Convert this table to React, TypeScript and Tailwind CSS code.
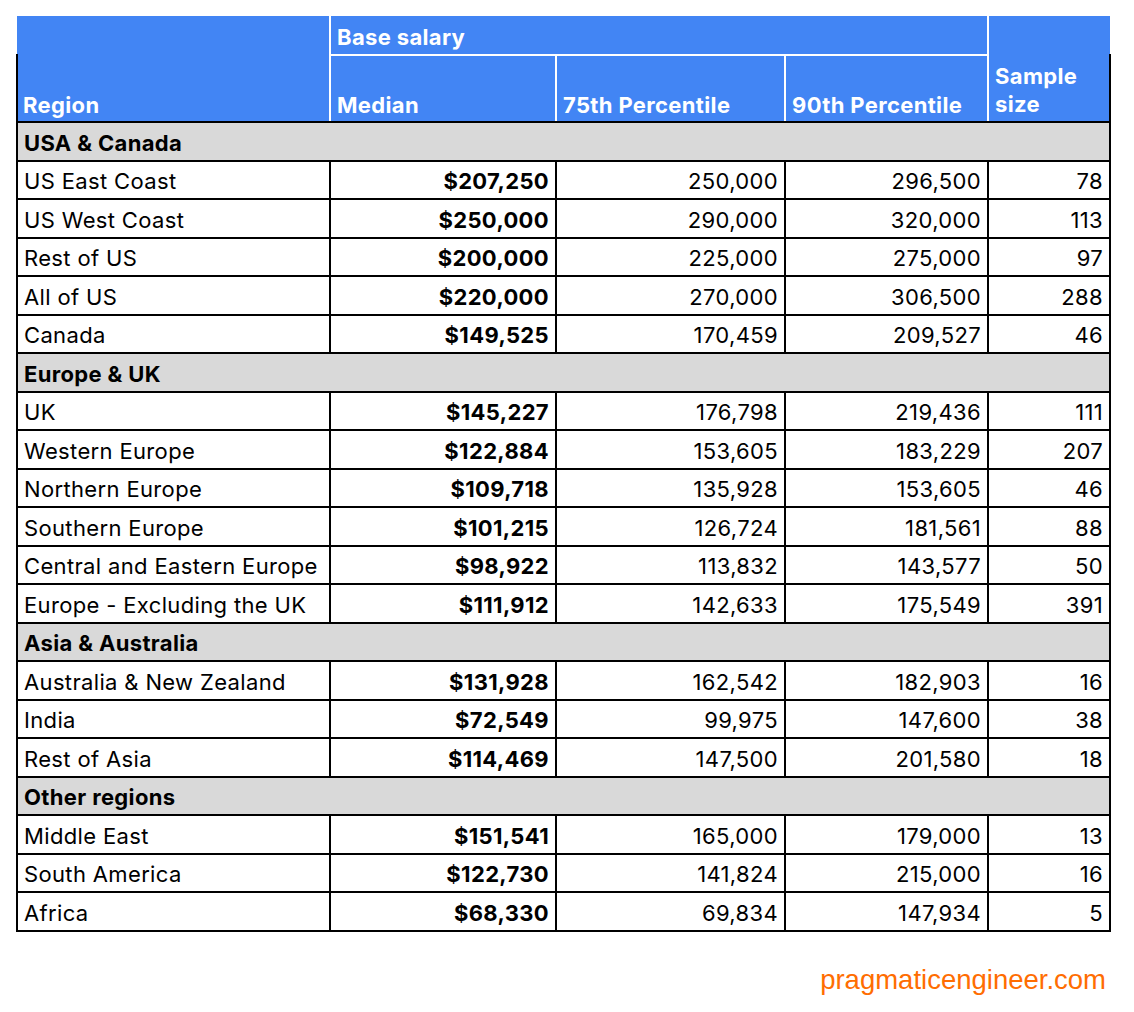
import React from "react";

type Row = { name: string; median: string; p75: string; p90: string; n: string };
type Group = { title: string; rows: Row[] };

const groups: Group[] = [
  {
    title: "USA & Canada",
    rows: [
      { name: "US East Coast", median: "$207,250", p75: "250,000", p90: "296,500", n: "78" },
      { name: "US West Coast", median: "$250,000", p75: "290,000", p90: "320,000", n: "113" },
      { name: "Rest of US", median: "$200,000", p75: "225,000", p90: "275,000", n: "97" },
      { name: "All of US", median: "$220,000", p75: "270,000", p90: "306,500", n: "288" },
      { name: "Canada", median: "$149,525", p75: "170,459", p90: "209,527", n: "46" },
    ],
  },
  {
    title: "Europe & UK",
    rows: [
      { name: "UK", median: "$145,227", p75: "176,798", p90: "219,436", n: "111" },
      { name: "Western Europe", median: "$122,884", p75: "153,605", p90: "183,229", n: "207" },
      { name: "Northern Europe", median: "$109,718", p75: "135,928", p90: "153,605", n: "46" },
      { name: "Southern Europe", median: "$101,215", p75: "126,724", p90: "181,561", n: "88" },
      { name: "Central and Eastern Europe", median: "$98,922", p75: "113,832", p90: "143,577", n: "50" },
      { name: "Europe - Excluding the UK", median: "$111,912", p75: "142,633", p90: "175,549", n: "391" },
    ],
  },
  {
    title: "Asia & Australia",
    rows: [
      { name: "Australia & New Zealand", median: "$131,928", p75: "162,542", p90: "182,903", n: "16" },
      { name: "India", median: "$72,549", p75: "99,975", p90: "147,600", n: "38" },
      { name: "Rest of Asia", median: "$114,469", p75: "147,500", p90: "201,580", n: "18" },
    ],
  },
  {
    title: "Other regions",
    rows: [
      { name: "Middle East", median: "$151,541", p75: "165,000", p90: "179,000", n: "13" },
      { name: "South America", median: "$122,730", p75: "141,824", p90: "215,000", n: "16" },
      { name: "Africa", median: "$68,330", p75: "69,834", p90: "147,934", n: "5" },
    ],
  },
];

const td = "border-2 border-black h-[38.5px] px-[6px] pt-[3px] pb-0 leading-none";

export default function App() {
  return (
    <div className="min-h-[1012px] w-[1134px] bg-white pt-4 pl-4 font-['Inter',sans-serif] text-[22px] tracking-[0.35px] text-black">
      <table className="w-[1093px] table-fixed border-collapse">
        <colgroup>
          <col className="w-[313px]" />
          <col className="w-[226px]" />
          <col className="w-[229px]" />
          <col className="w-[203px]" />
          <col className="w-[122px]" />
        </colgroup>
        <thead>
          <tr className="h-[39px] bg-[#4285f4] text-white">
            <th
              rowSpan={2}
              className="relative border-r-2 border-b-2 border-r-white border-b-black px-[6px] pb-[5px] text-left align-bottom font-bold leading-none"
            >
              <span className="absolute left-[-1px] top-[38px] bottom-[-2px] w-[2px] bg-black" />
              Region
            </th>
            <th colSpan={3} className="border-b-2 border-white px-[6px] pt-[4px] text-left align-middle font-bold leading-none">
              Base salary
            </th>
            <th
              rowSpan={2}
              className="relative border-l-2 border-b-2 border-l-white border-b-black px-[6px] pb-[3px] text-left align-bottom font-bold leading-[28px]"
            >
              <span className="absolute right-[-1px] top-[38px] bottom-[-2px] w-[2px] bg-black" />
              Sample
              <br />
              size
            </th>
          </tr>
          <tr className="h-[67px] bg-[#4285f4] text-white">
            <th className="border-b-2 border-b-black px-[6px] pb-[5px] text-left align-bottom font-bold leading-none">
              Median
            </th>
            <th className="border-x-2 border-x-white border-b-2 border-b-black px-[6px] pb-[5px] text-left align-bottom font-bold leading-none">
              75th Percentile
            </th>
            <th className="border-b-2 border-b-black px-[6px] pb-[5px] text-left align-bottom font-bold leading-none">
              90th Percentile
            </th>
          </tr>
        </thead>
        <tbody>
          {groups.map((g) => (
            <React.Fragment key={g.title}>
              <tr className="bg-[#d9d9d9]">
                <td colSpan={5} className={`${td} text-left font-bold`}>
                  {g.title}
                </td>
              </tr>
              {g.rows.map((r) => (
                <tr key={r.name}>
                  <td className={`${td} text-left`}>{r.name}</td>
                  <td className={`${td} text-right font-bold`}>{r.median}</td>
                  <td className={`${td} text-right`}>{r.p75}</td>
                  <td className={`${td} text-right`}>{r.p90}</td>
                  <td className={`${td} text-right`}>{r.n}</td>
                </tr>
              ))}
            </React.Fragment>
          ))}
        </tbody>
      </table>
      <div className="mt-[34px] w-[1093px] pr-[3px] text-right font-['Liberation_Sans',Arial,sans-serif] text-[27.5px] leading-none tracking-normal text-[#ff6d01]">
        pragmaticengineer.com
      </div>
    </div>
  );
}
